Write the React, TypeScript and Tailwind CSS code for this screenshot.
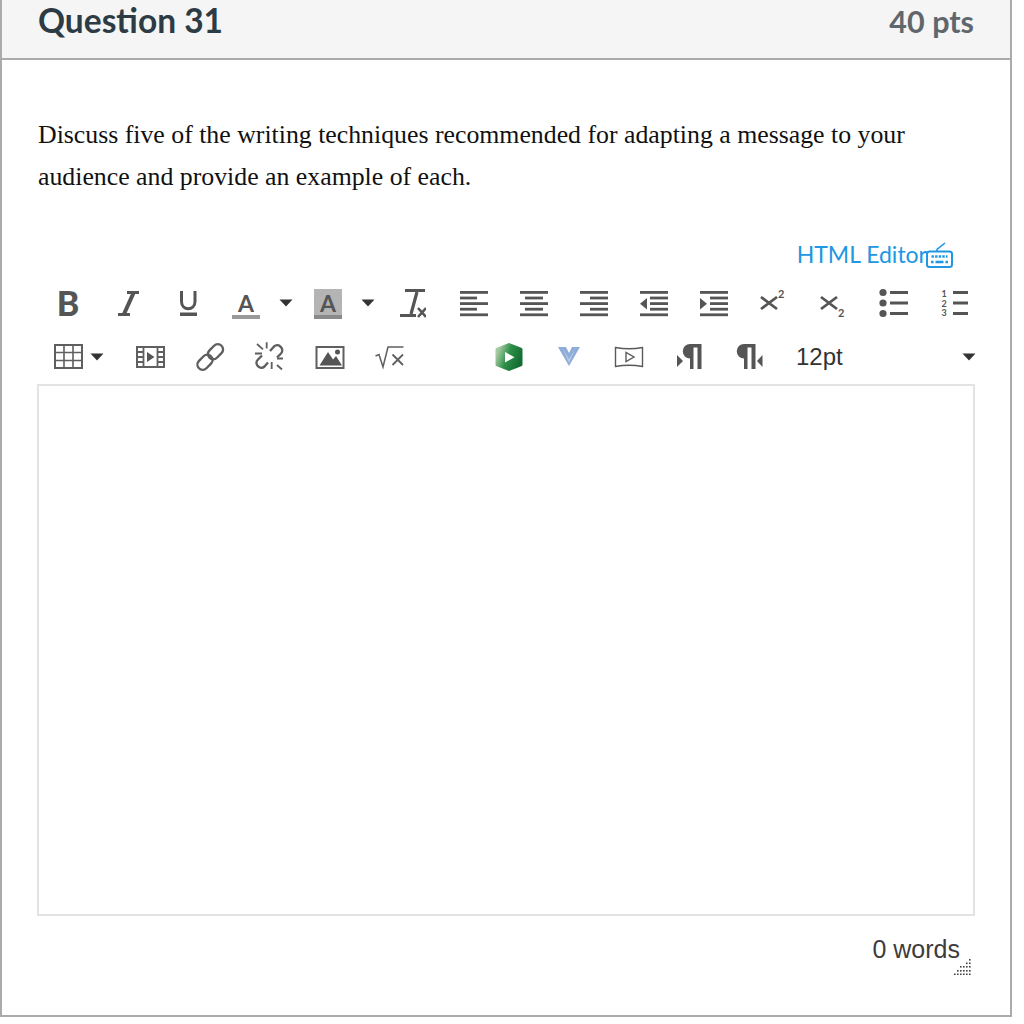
import React from 'react';

const ink = '#555555';
const line = '#5f5f5f';
const blue = '#2196e3';

const Svg = ({ w = 30, h = 30, children }: { w?: number; h?: number; children: React.ReactNode }) => (
  <svg width={w} height={h} viewBox={`0 0 ${w} ${h}`} fill="none">
    {children}
  </svg>
);

const Bars = ({ rows }: { rows: [number, number][] }) => (
  <Svg>
    {rows.map(([x, w], i) => (
      <rect key={i} x={x} y={3 + i * 5.6} width={w} height={2.8} fill={ink} />
    ))}
  </Svg>
);

const Cell = ({ w, children }: { w: string; children?: React.ReactNode }) => (
  <div className={`flex shrink-0 items-center justify-center ${w}`}>{children}</div>
);

const Caret = () => (
  <svg width="14" height="8" viewBox="0 0 14 8">
    <path d="M0.5 0.5H13.5L7 7.5Z" fill="#333333" />
  </svg>
);

const UnderA = ({ box }: { box?: boolean }) => (
  <Svg h={32}>
    {box && <rect x="1" y="2" width="28" height="26" fill="#b4b4b4" />}
    <text x="15" y="25" textAnchor="middle" fontFamily="Lato, sans-serif" fontWeight="700" fontSize="23" fill={ink}>A</text>
    <rect x="1" y="28" width="28" height="4" fill={box ? '#8a8a8a' : '#999999'} />
  </Svg>
);

const Indent = ({ arrow }: { arrow: string }) => (
  <Svg>
    <rect x="1" y="3" width="28" height="2.8" fill={ink} />
    <rect x="11" y="8.600" width="18" height="2.8" fill={ink} />
    <rect x="11" y="14.200" width="18" height="2.8" fill={ink} />
    <rect x="11" y="19.800" width="18" height="2.8" fill={ink} />
    <rect x="1" y="25.400" width="28" height="2.8" fill={ink} />
    <path d={arrow} fill={ink} />
  </Svg>
);

const grip = [
  [15, 0], [15, 3.5], [12, 3.5], [15, 7], [12, 7], [9, 7], [6, 7],
  [15, 11], [12, 11], [9, 11], [6, 11], [3, 11],
  [15, 14.5], [12, 14.5], [9, 14.5], [6, 14.5], [3, 14.5], [0, 14.5],
];

export default function App() {
  return (
    <div className="min-h-screen bg-white">
      <div className="flex h-[1017px] w-[1012px] flex-col border-x-2 border-b-2 border-[#ababab] bg-white">
        <header className="flex h-[60px] shrink-0 items-start justify-between border-b-2 border-[#ababab] bg-[#f5f5f5] pl-[36px] pr-[36px] font-['Lato',sans-serif]">
          <h1 className="text-[33.5px] leading-[40px] font-bold text-[#2d3b45]">Question 31</h1>
          <span className="pt-[1px] text-[30.5px] leading-[40px] font-bold text-[#5f676d]">40 pts</span>
        </header>

        <div className="flex flex-1 flex-col pl-[35px] pr-[35px]">
          <p className="ml-[1px] mt-[54px] font-['Liberation_Serif',serif] text-[25.8px] leading-[42px] text-[#111111]">
            Discuss five of the writing techniques recommended for adapting a message to your
            <br />
            audience and provide an example of each.
          </p>

          <div className="mt-[41px] flex items-center justify-end pr-[21px] font-['Lato',sans-serif] text-[23px] leading-[30px] text-[#2196e3]">
            <span className="mr-[-1px]">HTML Editor</span>
            <svg width="28" height="26" viewBox="0 0 28 26" fill="none" className="mt-[2px]">
              <path d="M11 9.500V7.500L19 1" stroke={blue} strokeWidth="1.6" />
              <rect x="1" y="9.500" width="25" height="15.500" rx="2.500" stroke={blue} strokeWidth="2" />
              <path d="M5.500 14.500H21.500" stroke={blue} strokeWidth="2.400" strokeDasharray="2.400 1.200" />
              <path d="M5 20H7.500M9.500 20H17.500M19.500 20H22" stroke={blue} strokeWidth="2.400" />
            </svg>
          </div>

          {/* toolbar row 1 */}
          <div className="ml-[1px] mt-[18px] flex h-[32px] items-center">
            <Cell w="w-[60px]">
              <span className="font-['Lato',sans-serif] text-[34px] leading-none font-black text-[#555555]">B</span>
            </Cell>
            <Cell w="w-[60px]">
              <Svg>
                <path d="M14 4.500H26M5 26.500H17M20.500 5L11 26" stroke={ink} strokeWidth="3" />
                <path d="M20.500 5L11 26" stroke={ink} strokeWidth="4" />
              </Svg>
            </Cell>
            <Cell w="w-[60px]">
              <Svg w={20}>
                <path d="M3.500 3V13.500C3.500 23 17 23 17 13.500V3" stroke={ink} strokeWidth="3" />
                <rect x="2" y="24.500" width="17" height="3.500" fill={ink} />
              </Svg>
            </Cell>
            <Cell w="w-[56px]"><UnderA /></Cell>
            <Cell w="w-[24px]"><Caret /></Cell>
            <Cell w="w-[60px]"><UnderA box /></Cell>
            <Cell w="w-[20px]"><Caret /></Cell>
            <Cell w="w-[66px]">
              <Svg>
                <path d="M9 2.500H29M21 4L15 26" stroke={ink} strokeWidth="3.200" />
                <rect x="4" y="26" width="16" height="3" fill={ink} />
                <path d="M22 20L30 29M30 20L22 29" stroke={ink} strokeWidth="2.600" />
              </Svg>
            </Cell>
            <Cell w="w-[60px]"><Bars rows={[[1, 28], [1, 17], [1, 28], [1, 17], [1, 28]]} /></Cell>
            <Cell w="w-[60px]"><Bars rows={[[1, 28], [6, 18], [1, 28], [6, 18], [1, 28]]} /></Cell>
            <Cell w="w-[60px]"><Bars rows={[[1, 28], [11, 18], [1, 28], [11, 18], [1, 28]]} /></Cell>
            <Cell w="w-[60px]"><Indent arrow="M8 10V21.500L1 15.700Z" /></Cell>
            <Cell w="w-[60px]"><Indent arrow="M1 10V21.500L8 15.700Z" /></Cell>
            <Cell w="w-[60px]">
              <Svg>
                <path d="M2 9L18 21M18 9L2 21" stroke={ink} strokeWidth="2.800" />
                <text x="19" y="10" fontFamily="Lato, sans-serif" fontSize="11" fontWeight="700" fill={ink}>2</text>
              </Svg>
            </Cell>
            <Cell w="w-[60px]">
              <Svg>
                <path d="M2 9L18 21M18 9L2 21" stroke={ink} strokeWidth="2.800" />
                <text x="19" y="29" fontFamily="Lato, sans-serif" fontSize="11" fontWeight="700" fill={ink}>2</text>
              </Svg>
            </Cell>
            <Cell w="w-[60px]">
              <Svg>
                <circle cx="4" cy="4.500" r="3.600" fill={ink} />
                <circle cx="4" cy="15" r="3.600" fill={ink} />
                <circle cx="4" cy="25.500" r="3.600" fill={ink} />
                <path d="M11 4.500H29M11 15H29M11 25.500H29" stroke={ink} strokeWidth="2.800" />
              </Svg>
            </Cell>
            <Cell w="w-[60px]">
              <Svg>
                <text x="5" y="9" textAnchor="middle" fontFamily="Lato, sans-serif" fontSize="9" fontWeight="700" fill={ink}>1</text>
                <text x="5" y="18.500" textAnchor="middle" fontFamily="Lato, sans-serif" fontSize="9" fontWeight="700" fill={ink}>2</text>
                <text x="5" y="28" textAnchor="middle" fontFamily="Lato, sans-serif" fontSize="9" fontWeight="700" fill={ink}>3</text>
                <path d="M14 4.500H29M14 15H29M14 25.500H29" stroke={ink} strokeWidth="2.800" />
              </Svg>
            </Cell>
          </div>

          {/* toolbar row 2 */}
          <div className="ml-[1px] mt-[22px] flex h-[32px] items-center pl-[15px]">
            <Cell w="w-[30px]">
              <Svg>
                <rect x="2" y="3" width="27" height="23" stroke={line} strokeWidth="2" />
                <path d="M2 10.500H29M2 18.500H29M11 3V26M20 3V26" stroke={line} strokeWidth="1.600" />
              </Svg>
            </Cell>
            <Cell w="w-[28px]"><Caret /></Cell>
            <Cell w="w-[60px] ml-[9px]">
              <Svg>
                <rect x="2" y="5" width="27" height="20" stroke={line} strokeWidth="2" />
                <path d="M8.500 5V25M22.500 5V25M2 10H8.500M2 15H8.500M2 20H8.500M22.500 10H29M22.500 15H29M22.500 20H29" stroke={line} strokeWidth="1.800" />
                <path d="M12 10V20L19.500 15Z" fill={ink} />
              </Svg>
            </Cell>
            <Cell w="w-[60px]">
              <Svg>
                <rect x="12" y="4.500" width="17" height="10.500" rx="5.250" transform="rotate(-45 20.500 9.750)" stroke={line} strokeWidth="2.400" />
                <rect x="1.500" y="15" width="17" height="10.500" rx="5.250" transform="rotate(-45 10 20.250)" stroke={line} strokeWidth="2.400" />
              </Svg>
            </Cell>
            <Cell w="w-[60px]">
              <Svg>
                <path d="M15 9L19 4.500C23.500 0.500 30 7 26 11.500L22 15.500" stroke={line} strokeWidth="2.400" />
                <path d="M13 20.500L9.500 24.500C5 28.500 -1.500 22 3 17.500L7 13.500" stroke={line} strokeWidth="2.400" />
                <path d="M2 2L8 7.300M11.700 0.300V6.500M0 11.500H7M22 23L27 27.500M22 16.500H28M16.700 20V27" stroke={line} strokeWidth="1.800" />
              </Svg>
            </Cell>
            <Cell w="w-[60px]">
              <Svg>
                <rect x="1.500" y="5" width="27" height="21" stroke={line} strokeWidth="2" />
                <path d="M4.500 23.500L13 10L18 17.500L21 14L27 23.500Z" fill={ink} />
                <circle cx="22.500" cy="10" r="2.500" fill={ink} />
              </Svg>
            </Cell>
            <Cell w="w-[60px]">
              <Svg>
                <path d="M0.500 14L4 12.500L8 25L13 5H28.500" stroke={line} strokeWidth="1.500" />
                <path d="M17.500 12.500L28 23M28 12.500L17.500 23" stroke={line} strokeWidth="1.800" />
              </Svg>
            </Cell>
            <Cell w="w-[59px]" />
            <Cell w="w-[60px]">
              <svg width="30" height="30" viewBox="0 0 30 30" fill="none" className="blur-[0.6px]">
                <defs>
                  <linearGradient id="gr" x1="0" y1="0.300" x2="1" y2="0.700">
                    <stop offset="0" stopColor="#a5c9a2" />
                    <stop offset="0.450" stopColor="#2c8f47" />
                    <stop offset="1" stopColor="#136c31" />
                  </linearGradient>
                </defs>
                <path d="M15 3L26.500 7.500V22.500L15 27L3.500 22.500V7.500Z" fill="url(#gr)" stroke="url(#gr)" strokeWidth="4" strokeLinejoin="round" />
                <path d="M11 10V20.500L20.500 15.200Z" fill="#ffffff" />
              </svg>
            </Cell>
            <Cell w="w-[60px]">
              <svg width="30" height="26" viewBox="0 0 30 26" fill="none" className="blur-[0.5px]">
                <path d="M4 3H12L15 9L18 3H26L15 22Z" fill="#8fadd9" />
                <path d="M9 5L15 15L21 5L15 19Z" fill="#b9cbe8" />
              </svg>
            </Cell>
            <Cell w="w-[60px]">
              <Svg h={26}>
                <path d="M1.500 3.500C10 5 20 5 28.500 3.500V22.500C20 21 10 21 1.500 22.500Z" stroke="#5a5a5a" strokeWidth="1.400" />
                <path d="M12 8.500V17.500L20 13Z" stroke="#5a5a5a" strokeWidth="1.400" />
              </Svg>
            </Cell>
            <Cell w="w-[60px]">
              <Svg>
                <path d="M3 13V25L9 19Z" fill={ink} />
                <path d="M28 2H16A7.200 7.200 0 0 0 16 16.500V27H19.500V5.500H23.500V27H27.500V2Z" fill={ink} />
              </Svg>
            </Cell>
            <Cell w="w-[60px]">
              <Svg>
                <path d="M22 2H10A7.200 7.200 0 0 0 10 16.500V27H13.500V5.500H17.500V27H21.500V2Z" fill={ink} />
                <path d="M28.500 13V25L23 19Z" fill={ink} />
              </Svg>
            </Cell>
            <div className="-mr-[1px] flex flex-1 items-center justify-between pl-[17px]">
              <span className="font-['Liberation_Sans',sans-serif] text-[24px] leading-none text-[#333333]">12pt</span>
              <Caret />
            </div>
          </div>

          <div className="mt-[11px] h-[532px] w-[938px] border-2 border-[#e3e3e3] bg-white" />

          <div className="mt-[19px] flex w-[938px] flex-col items-end">
            <span className="pr-[15px] font-['Liberation_Sans',sans-serif] text-[25px] leading-[28px] text-[#3c3c3c]">0 words</span>
            <svg width="17" height="16" viewBox="0 0 17 16" className="mr-[4px] -mt-[4px]">
              {grip.map(([x, y]) => (
                <rect key={`${x}-${y}`} x={x} y={y} width="1.600" height="1.600" fill="#444444" />
              ))}
            </svg>
          </div>
        </div>
      </div>
    </div>
  );
}
